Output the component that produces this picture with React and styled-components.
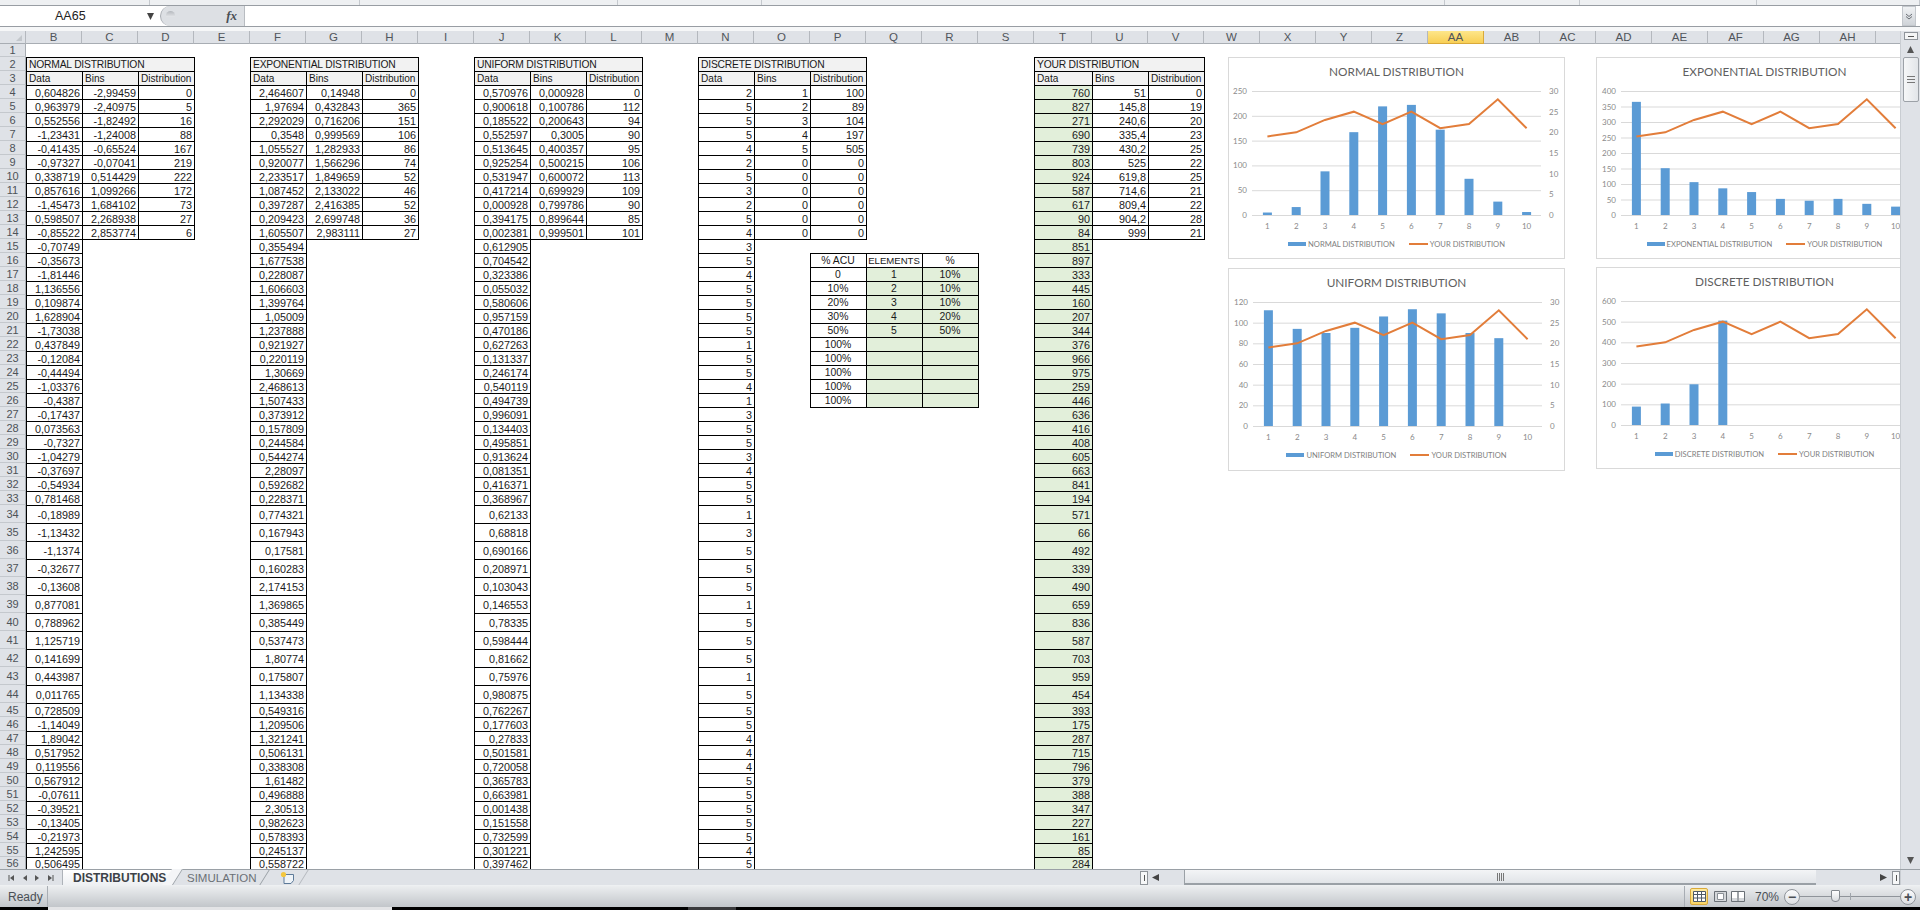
import React from 'react'
import styled, { createGlobalStyle } from 'styled-components'

const COLS = ['B','C','D','E','F','G','H','I','J','K','L','M','N','O','P','Q','R','S','T','U','V','W','X','Y','Z','AA','AB','AC','AD','AE','AF','AG','AH','AI']
const GRID = '26px repeat(18, 56px) 58px repeat(14, 56px) 56px'

const col = s => s.split(' ')

const data = {
  B: col('0,604826 0,963979 0,552556 -1,23431 -0,41435 -0,97327 0,338719 0,857616 -1,45473 0,598507 -0,85522 -0,70749 -0,35673 -1,81446 1,136556 0,109874 1,628904 -1,73038 0,437849 -0,12084 -0,44494 -1,03376 -0,4387 -0,17437 0,073563 -0,7327 -1,04279 -0,37697 -0,54934 0,781468 -0,18989 -1,13432 -1,1374 -0,32677 -0,13608 0,877081 0,788962 1,125719 0,141699 0,443987 0,011765 0,728509 -1,14049 1,89042 0,517952 0,119556 0,567912 -0,07611 -0,39521 -0,13405 -0,21973 1,242595 0,506495'),
  C: col('-2,99459 -2,40975 -1,82492 -1,24008 -0,65524 -0,07041 0,514429 1,099266 1,684102 2,268938 2,853774'),
  D: col('0 5 16 88 167 219 222 172 73 27 6'),
  F: col('2,464607 1,97694 2,292029 0,3548 1,055527 0,920077 2,233517 1,087452 0,397287 0,209423 1,605507 0,355494 1,677538 0,228087 1,606603 1,399764 1,05009 1,237888 0,921927 0,220119 1,30669 2,468613 1,507433 0,373912 0,157809 0,244584 0,544274 2,28097 0,592682 0,228371 0,774321 0,167943 0,17581 0,160283 2,174153 1,369865 0,385449 0,537473 1,80774 0,175807 1,134338 0,549316 1,209506 1,321241 0,506131 0,338308 1,61482 0,496888 2,30513 0,982623 0,578393 0,245137 0,558722'),
  G: col('0,14948 0,432843 0,716206 0,999569 1,282933 1,566296 1,849659 2,133022 2,416385 2,699748 2,983111'),
  H: col('0 365 151 106 86 74 52 46 52 36 27'),
  J: col('0,570976 0,900618 0,185522 0,552597 0,513645 0,925254 0,531947 0,417214 0,000928 0,394175 0,002381 0,612905 0,704542 0,323386 0,055032 0,580606 0,957159 0,470186 0,627263 0,131337 0,246174 0,540119 0,494739 0,996091 0,134403 0,495851 0,913624 0,081351 0,416371 0,368967 0,62133 0,68818 0,690166 0,208971 0,103043 0,146553 0,78335 0,598444 0,81662 0,75976 0,980875 0,762267 0,177603 0,27833 0,501581 0,720058 0,365783 0,663981 0,001438 0,151558 0,732599 0,301221 0,397462'),
  K: col('0,000928 0,100786 0,200643 0,3005 0,400357 0,500215 0,600072 0,699929 0,799786 0,899644 0,999501'),
  L: col('0 112 94 90 95 106 113 109 90 85 101'),
  N: col('2 5 5 5 4 2 5 3 2 5 4 3 5 4 5 5 5 5 1 5 5 4 1 3 5 5 3 4 5 5 1 3 5 5 5 1 5 5 5 1 5 5 5 4 4 4 5 5 5 5 5 4 5'),
  O: col('1 2 3 4 5 0 0 0 0 0 0'),
  P: col('100 89 104 197 505 0 0 0 0 0 0'),
  T: col('760 827 271 690 739 803 924 587 617 90 84 851 897 333 445 160 207 344 376 966 975 259 446 636 416 408 605 663 841 194 571 66 492 339 490 659 836 587 703 959 454 393 175 287 715 796 379 388 347 227 161 85 284'),
  U: col('51 145,8 240,6 335,4 430,2 525 619,8 714,6 809,4 904,2 999'),
  V: col('0 19 20 23 25 22 25 21 22 28 21'),
}

const tables = [
  { first: 'B', title: 'NORMAL DISTRIBUTION' },
  { first: 'F', title: 'EXPONENTIAL DISTRIBUTION' },
  { first: 'J', title: 'UNIFORM DISTRIBUTION' },
  { first: 'N', title: 'DISCRETE DISTRIBUTION' },
  { first: 'T', title: 'YOUR DISTRIBUTION' },
]

const acu = ['% ACU','0','10%','20%','30%','50%','100%','100%','100%','100%','100%']
const elements = ['ELEMENTS','1','2','3','4','5','','','','','']
const percents = ['%','10%','10%','10%','20%','50%','','','','','']

const YOUR = [19,20,23,25,22,25,21,22,28,21]

// the right axis of the two right hand charts sits behind the scrollbar
const charts = [
  { title: 'NORMAL DISTRIBUTION', bars: [5,16,88,167,219,222,172,73,27,6], max: 250, step: 50, left: 24, rightAxis: true },
  { title: 'EXPONENTIAL DISTRIBUTION', bars: [365,151,106,86,74,52,46,52,36,27], max: 400, step: 50, left: 25 },
  { title: 'UNIFORM DISTRIBUTION', bars: [112,94,90,95,106,113,109,90,85], max: 120, step: 20, left: 25, nudge: true, rightAxis: true },
  { title: 'DISCRETE DISTRIBUTION', bars: [89,104,197,505], max: 600, step: 100, left: 25 },
]

const GlobalStyle = createGlobalStyle`
  html, body { margin: 0; padding: 0; background: #fff; }
  * { box-sizing: border-box; }
`

const Window = styled.div`
  width: 1920px;
  height: 910px;
  overflow: hidden;
  display: flex;
  flex-direction: column;
  font-family: "Liberation Sans", Arial, sans-serif;
  background: #fff;
`

const RibbonEdge = styled.div`
  height: 6px;
  display: flex;
  background: #eef0f2;
  border-bottom: 1px solid #989da3;
`

const RibbonGroup = styled.div`
  width: ${p => p.$w}px;
  border-right: 1px solid #c5c9ce;
`

const FormulaRow = styled.div`
  height: 21px;
  display: flex;
  align-items: stretch;
  background: #fff;
  border-bottom: 1px solid #989da3;
`

const NameBox = styled.div`
  width: 160px;
  display: flex;
  align-items: center;
  justify-content: space-between;
  padding: 0 6px 0 55px;
  font-size: 12.5px;
  color: #222;
`

const FxGroove = styled.div`
  width: 85px;
  display: flex;
  align-items: center;
  justify-content: flex-end;
  padding: 0 7px 0 0;
  background: #dde0e4;
  border-radius: 11px 0 0 11px;
  border-left: 1px solid #a8acb2;
  border-right: 1px solid #b8bcc1;
  font: italic bold 13px "Liberation Serif", serif;
  color: #4a4f55;
  position: relative;

  &::before {
    content: '';
    position: absolute;
    left: 5px;
    top: 5px;
    width: 9px;
    height: 6px;
    border-radius: 5px 5px 0 0;
    background: linear-gradient(#b4b8bd, #e4e6e9);
  }
`

const FormulaInput = styled.div`
  flex: 1;
`

const ExpandButton = styled.div`
  width: 14px;
  margin-right: 4px;
  display: flex;
  align-items: center;
  justify-content: center;
  background: linear-gradient(#f0f2f4, #cfd3d8);
  border: 1px solid #c3c7cc;
`

const RowGap = styled.div`
  height: 4px;
  background: #f6f7f8;
`

const SheetArea = styled.div`
  height: 838px;
  display: flex;
`

const Grid = styled.div`
  width: 1900px;
  overflow: hidden;
  position: relative;
  background: #fff;
`

const Row = styled.div`
  display: grid;
  grid-template-columns: ${GRID};
  height: ${p => p.$h}px;
`

const ColHead = styled.div`
  display: flex;
  align-items: center;
  justify-content: center;
  font-size: 11.5px;
  color: #50555b;
  background: ${p => p.$active ? 'linear-gradient(#fde68a, #f8cf55)' : '#dfe2e7'};
  border-right: 1px solid ${p => p.$active ? '#d9a93a' : '#b4b8be'};
  border-bottom: 1px solid ${p => p.$active ? '#d9a93a' : '#a8adb3'};
`

const Corner = styled(ColHead)`
  position: relative;

  &::after {
    content: '';
    position: absolute;
    right: 3px;
    bottom: 2px;
    border-left: 6px solid transparent;
    border-bottom: 6px solid #c3c7cc;
  }
`

const RowHead = styled.div`
  display: flex;
  align-items: center;
  justify-content: center;
  font-size: 11px;
  color: #4d5258;
  background: #dfe2e7;
  border-right: 1px solid #a8adb3;
  border-bottom: 1px solid #c4c8cd;
`

const Cell = styled.div`
  position: relative;
  display: flex;
  align-items: center;
  justify-content: ${p => p.$center ? 'center' : 'flex-end'};
  padding-right: ${p => p.$center ? '0' : '2px'};
  padding-top: 1px;
  font-size: 10.8px;
  color: #1a1a1a;
  white-space: nowrap;
  background: ${p => p.$green ? '#e2efda' : 'transparent'};

  &::after {
    content: '';
    position: absolute;
    left: 0;
    top: 0;
    right: -1px;
    bottom: -1px;
    border: 1px solid #000;
    pointer-events: none;
  }
`

const HeadCell = styled(Cell)`
  justify-content: flex-start;
  padding: 1px 0 0 3px;
  font-size: 10.1px;
  background: #f2f2f2;
`

const TitleCell = styled(HeadCell)`
  grid-column: span 3;
  font-size: 10.3px;
  letter-spacing: -0.2px;
`

const BandCell = styled(Cell)`
  font-size: 10.4px;
`

const TightCell = styled(Cell)`
  font-size: 9.6px;
`

const Blank = styled.div``

const ChartLayer = styled.div`
  position: absolute;
  left: 1228px;
  top: 26px;
  display: grid;
  grid-template-columns: 337px 337px;
  grid-auto-rows: 202px;
  column-gap: 31px;
  row-gap: 8px;
`

const ChartCard = styled.div`
  height: ${p => p.$nudge ? 203 : 202}px;
  margin-top: ${p => p.$nudge ? 1 : 0}px;
  background: #fff;
  border: 1px solid #d9d9d9;
  display: flex;
  flex-direction: column;
  align-items: center;
  font-family: Lato, "Open Sans", sans-serif;
`

const ChartTitle = styled.div`
  height: 18px;
  margin-top: 5px;
  line-height: 18px;
  font-size: 11.8px;
  color: #5f5f5f;
`

const Plot = styled.svg`
  display: block;
  width: 335px;
  height: 150px;
  flex: none;
  text {
    font-family: Lato, "Open Sans", sans-serif;
    font-size: 8px;
    fill: #8a8a8a;
  }
`

const Legend = styled.div`
  margin-top: 8px;
  display: flex;
  align-items: center;
  gap: 14px;
  font-size: 7.6px;
  color: #7f7f7f;
`

const LegendItem = styled.div`
  display: flex;
  align-items: center;
  gap: 2px;
  white-space: nowrap;
`

const BarKey = styled.span`
  width: 18px;
  height: 4px;
  background: #5b9bd5;
`

const LineKey = styled.span`
  width: 19px;
  height: 2px;
  background: #e27d3a;
`

const VScroll = styled.div`
  width: 20px;
  background: #dfe2e7;
  border-left: 1px solid #c9cdd2;
  display: flex;
  flex-direction: column;
  align-items: center;
`

const SplitTop = styled.div`
  width: 14px;
  height: 8px;
  margin-top: 1px;
  background: #f4f5f6;
  border: 1px solid #8f949a;
  display: flex;
  align-items: center;
  justify-content: center;

  &::after {
    content: '';
    width: 6px;
    height: 1px;
    background: #555;
  }
`

const Thumb = styled.div`
  width: 16px;
  height: 45px;
  margin-top: 4px;
  border: 1px solid #9ca1a7;
  border-radius: 2px;
  background: linear-gradient(90deg, #f6f7f8, #e2e5e9);
  display: flex;
  align-items: center;
  justify-content: center;
`

const ScrollSpace = styled.div`
  flex: 1;
`

const ArrowSlot = styled.div`
  margin-top: ${p => p.$top || 0}px;
  margin-bottom: ${p => p.$bottom || 0}px;
  margin-left: ${p => p.$left || 0}px;
  height: 8px;
  display: flex;
  align-items: center;
  line-height: 0;
`

const TabRow = styled.div`
  height: 16px;
  display: flex;
  background: #dfe2e7;
  border-top: 1px solid #9aa0a6;
`

const TabArea = styled.div`
  width: 1140px;
  display: flex;
  align-items: stretch;
`

const TabNav = styled.div`
  width: 63px;
  display: flex;
  align-items: center;
  justify-content: space-around;
  padding: 0 6px;
  border-right: 1px solid #aeb3b9;
`

const ActiveTab = styled.div`
  position: relative;
  width: 110px;
  padding-left: 10px;
  display: flex;
  align-items: center;
  background: linear-gradient(#ffffff, #eef0f3);
  font-size: 12px;
  font-weight: bold;
  color: #3d4248;
  z-index: 1;

  &::after {
    content: '';
    position: absolute;
    right: -5px;
    top: -1px;
    bottom: 0;
    width: 10px;
    background: #f4f5f7;
    border-right: 1px solid #9aa0a6;
    transform: skewX(-32deg);
    z-index: -1;
  }
`

const SheetTab = styled.div`
  position: relative;
  width: 97px;
  padding-left: 14px;
  display: flex;
  align-items: center;
  font-size: 11.5px;
  color: #6b7076;

  &::after {
    content: '';
    position: absolute;
    right: 5px;
    top: 0;
    bottom: 0;
    width: 1px;
    background: #9aa0a6;
    transform: skewX(-32deg);
  }
`

const NewTab = styled.div`
  position: relative;
  width: 34px;
  display: flex;
  align-items: center;
  padding-left: 10px;

  &::after {
    content: '';
    position: absolute;
    right: 0;
    top: 0;
    bottom: 0;
    width: 1px;
    background: #b4b8be;
    transform: skewX(-32deg);
  }
`

const HScroll = styled.div`
  flex: 1;
  display: flex;
  align-items: center;
`

const SplitBox = styled.div`
  width: 8px;
  height: 14px;
  margin-left: ${p => p.$left || 0}px;
  background: #f6f7f8;
  border: 1px solid #8f949a;
  display: flex;
  align-items: center;
  justify-content: center;

  &::after {
    content: '';
    width: 1px;
    height: 6px;
    background: #555;
  }
`

const HThumb = styled.div`
  width: 632px;
  height: 15px;
  margin-left: 25px;
  border-left: 1px solid #9aa0a6;
  border-bottom: 2px solid #9aa0a6;
  background: linear-gradient(#f3f4f6, #e1e4e8);
  display: flex;
  align-items: center;
  justify-content: center;
`

const ScrollCorner = styled.div`
  width: 20px;
  border-left: 1px solid #c9cdd2;
`

const StatusBar = styled.div`
  height: 22px;
  border-top: 1px solid #eef0f2;
  display: flex;
  align-items: center;
  background: linear-gradient(#eceef0, #c2c6ca);
  font-size: 12px;
  color: #4a4f55;
`

const StatusText = styled.div`
  width: 48px;
  align-self: stretch;
  padding-left: 8px;
  display: flex;
  align-items: center;
  border-right: 1px solid #a8adb3;
`

const StatusFill = styled.div`
  flex: 1;
`

const ViewGroup = styled.div`
  width: 236px;
  align-self: stretch;
  display: flex;
  align-items: center;
  padding-left: 5px;
  border-left: 1px solid #a8adb3;
`

const ViewButton = styled.div`
  width: 18px;
  height: 17px;
  margin-right: ${p => p.$gap}px;
  display: flex;
  align-items: center;
  justify-content: center;
  border-radius: 2px;
  background: ${p => p.$on ? 'linear-gradient(#fdeaa0, #f9d466)' : 'transparent'};
  border: 1px solid ${p => p.$on ? '#d9a93a' : 'transparent'};
`

const ZoomLabel = styled.div`
  width: 29px;
  margin-left: 8px;
  font-size: 12px;
`

const ZoomButton = styled.div`
  width: 16px;
  height: 16px;
  border-radius: 50%;
  flex: none;
  border: 1px solid #8f949a;
  background: linear-gradient(#fbfbfc, #dcdfe2);
  display: flex;
  align-items: center;
  justify-content: center;
  font-size: 14px;
  font-weight: bold;
  line-height: 1;
  color: #4a4f55;
`

const ZoomTrack = styled.div`
  position: relative;
  width: 100px;
  height: 1px;
  background: #8f949a;
`

const ZoomThumb = styled.div`
  position: absolute;
  left: 31px;
  top: -6px;
  width: 9px;
  height: 12px;
  background: linear-gradient(#fff, #d9dcdf);
  border: 1px solid #84898f;
  border-radius: 1px 1px 4px 4px;
`

const ZoomTick = styled.div`
  position: absolute;
  left: 50px;
  top: -3px;
  width: 1px;
  height: 7px;
  background: #a0a5ab;
`

const Taskbar = styled.div`
  height: 3px;
  display: flex;
  background: #000;
`

const TaskSlot = styled.div`
  width: ${p => p.$w}px;
  background: ${p => p.$color};
`

const Tri = ({ dir = 'right', size = 6, fill = '#4a4f55' }) => {
  const pts = { right: '0,0 6,3 0,6', left: '6,0 0,3 6,6', up: '0,6 3,0 6,6', down: '0,0 6,0 3,6' }
  return (
    <svg width={size} height={size} viewBox="0 0 6 6"><polygon points={pts[dir]} fill={fill} /></svg>
  )
}

const Chevron = () => (
  <svg width="8" height="7" viewBox="0 0 8 7">
    <path d="M1 1l3 2.5L7 1M1 3.5L4 6l3-2.5" fill="none" stroke="#6a6f75" />
  </svg>
)

const Grip = ({ vertical }) => (
  vertical
    ? <svg width="8" height="7"><path d="M0 .5h8M0 3.5h8M0 6.5h8" stroke="#777" /></svg>
    : <svg width="8" height="8"><path d="M.5 0v8M2.5 0v8M4.5 0v8M6.5 0v8" stroke="#777" /></svg>
)

const NavIcon = ({ dir, end }) => (
  <svg width="8" height="8" viewBox="0 0 8 8">
    {dir === 'left'
      ? <polygon points="6,1 2,4 6,7" fill="#555" />
      : <polygon points="2,1 6,4 2,7" fill="#555" />}
    {end && (dir === 'left'
      ? <rect x="0.5" y="1" width="1" height="6" fill="#555" />
      : <rect x="6.5" y="1" width="1" height="6" fill="#555" />)}
  </svg>
)

const NewSheetIcon = () => (
  <svg width="15" height="13" viewBox="0 0 15 13">
    <path d="M4 3.5h9.5v6l-2.5 3H4z" fill="#eef3f8" stroke="#5d7a99" />
    <circle cx="3.5" cy="3.5" r="2.6" fill="#f3c63f" />
  </svg>
)

const NormalIcon = () => (
  <svg width="13" height="11" viewBox="0 0 13 11">
    <path d="M.5.5h12v10H.5zM.5 3.5h12M.5 7h12M4.5.5v10M8.5.5v10" fill="#fff" stroke="#4f5a66" />
  </svg>
)

const PageIcon = () => (
  <svg width="13" height="11" viewBox="0 0 13 11">
    <path d="M.5.5h12v10H.5z" fill="#d4d7da" stroke="#6a7076" />
    <path d="M3.5 2.5h6v6h-6z" fill="#fff" stroke="#8a9096" />
  </svg>
)

const BreakIcon = () => (
  <svg width="14" height="11" viewBox="0 0 14 11">
    <path d="M.5.5h13v10H.5z" fill="#d4d7da" stroke="#6a7076" />
    <path d="M1 1h5v6H1zM8 1h5v6H8z" fill="#fff" />
    <path d="M7 .5v10" stroke="#6a7076" />
  </svg>
)

const Chart = ({ title, bars, max, step, left, nudge, rightAxis }) => {
  const top = 10
  const bottom = 134
  const width = 288
  const band = width / 10
  const y = v => bottom - (v / max) * (bottom - top)
  const yr = v => bottom - (v / 30) * (bottom - top)
  const ticks = []
  for (let v = 0; v <= max; v += step) ticks.push(v)
  const line = YOUR.map((v, i) => `${left + band * (i + 0.5)},${yr(v)}`).join(' ')
  return (
    <ChartCard $nudge={nudge}>
      <ChartTitle>{title}</ChartTitle>
      <Plot viewBox="0 0 335 150">
        {ticks.map(v => (
          <g key={v}>
            <line x1={left - 1} x2={left + width} y1={y(v) + 0.5} y2={y(v) + 0.5} stroke="#d9d9d9" />
            <text x={left - 6} y={y(v) + 3} textAnchor="end">{v}</text>
          </g>
        ))}
        {rightAxis && [0, 5, 10, 15, 20, 25, 30].map(v => (
          <text key={v} x={left + width + 8} y={yr(v) + 3}>{v}</text>
        ))}
        {bars.map((v, i) => (
          <rect key={i} x={left + band * (i + 0.5) - 4.5} y={y(v)} width="9" height={bottom - y(v)} fill="#5b9bd5" />
        ))}
        <polyline points={line} fill="none" stroke="#e27d3a" strokeWidth="2" />
        {YOUR.map((_, i) => (
          <text key={i} x={left + band * (i + 0.5)} y="148" textAnchor="middle">{i + 1}</text>
        ))}
      </Plot>
      <Legend>
        <LegendItem><BarKey />{title}</LegendItem>
        <LegendItem><LineKey />YOUR DISTRIBUTION</LegendItem>
      </Legend>
    </ChartCard>
  )
}

const rowHeight = r => {
  if (r >= 34 && r <= 44) return 18
  if (r === 56) return 12
  return 14
}

// builds one sheet row, column by column, so empty cells just hold their place
const renderCells = r => {
  const out = []
  let skip = 0
  COLS.forEach((c, i) => {
    if (skip > 0) {
      skip--
      return
    }
    const table = tables.find(t => t.first === c)
    const owner = tables.find(t => {
      const at = COLS.indexOf(t.first)
      return i >= at && i < at + 3
    })
    if (r === 2 && table) {
      out.push(<TitleCell key={c}>{table.title}</TitleCell>)
      skip = 2
      return
    }
    if (r === 3 && owner) {
      const at = i - COLS.indexOf(owner.first)
      out.push(<HeadCell key={c}>{['Data', 'Bins', 'Distribution'][at]}</HeadCell>)
      return
    }
    if (r >= 16 && r <= 26) {
      const k = r - 16
      if (c === 'P') {
        out.push(<BandCell key={c} $center>{acu[k]}</BandCell>)
        return
      }
      if (c === 'Q') {
        out.push(k === 0
          ? <TightCell key={c} $center>{elements[k]}</TightCell>
          : <BandCell key={c} $center $green>{elements[k]}</BandCell>)
        return
      }
      if (c === 'R') {
        out.push(<BandCell key={c} $center $green={k > 0}>{percents[k]}</BandCell>)
        return
      }
    }
    const values = data[c]
    const value = values && r >= 4 ? values[r - 4] : undefined
    if (value !== undefined) {
      out.push(<Cell key={c} $green={c === 'T'}>{value}</Cell>)
      return
    }
    out.push(<Blank key={c} />)
  })
  return out
}

const rows = Array.from({ length: 56 }, (_, i) => i + 1)

const App = () => (
  <Window>
    <GlobalStyle />
    <RibbonEdge>
      {[150, 210, 258, 144, 683, 135, 177, 163].map((w, i) => <RibbonGroup key={i} $w={w} />)}
    </RibbonEdge>
    <FormulaRow>
      <NameBox>
        AA65
        <Tri dir="down" size={7} fill="#444" />
      </NameBox>
      <FxGroove>fx</FxGroove>
      <FormulaInput />
      <ExpandButton><Chevron /></ExpandButton>
    </FormulaRow>
    <RowGap />
    <SheetArea>
      <Grid>
        <Row $h={12}>
          <Corner />
          {COLS.map(c => <ColHead key={c} $active={c === 'AA'}>{c === 'AI' ? '' : c}</ColHead>)}
        </Row>
        {rows.map(r => (
          <Row key={r} $h={rowHeight(r)}>
            <RowHead>{r}</RowHead>
            {renderCells(r)}
          </Row>
        ))}
        <ChartLayer>
          {charts.map(c => <Chart key={c.title} {...c} />)}
        </ChartLayer>
      </Grid>
      <VScroll>
        <SplitTop />
        <ArrowSlot $top={5}><Tri dir="up" size={7} fill="#555" /></ArrowSlot>
        <Thumb><Grip vertical /></Thumb>
        <ScrollSpace />
        <ArrowSlot $bottom={5}><Tri dir="down" size={7} fill="#555" /></ArrowSlot>
      </VScroll>
    </SheetArea>
    <TabRow>
      <TabArea>
        <TabNav>
          <NavIcon dir="left" end />
          <NavIcon dir="left" />
          <NavIcon dir="right" />
          <NavIcon dir="right" end />
        </TabNav>
        <ActiveTab>DISTRIBUTIONS</ActiveTab>
        <SheetTab>SIMULATION</SheetTab>
        <NewTab><NewSheetIcon /></NewTab>
      </TabArea>
      <HScroll>
        <SplitBox />
        <ArrowSlot $left={4}><Tri dir="left" size={7} fill="#444" /></ArrowSlot>
        <HThumb><Grip /></HThumb>
        <ScrollSpace />
        <Tri dir="right" size={7} fill="#444" />
        <SplitBox $left={5} />
      </HScroll>
      <ScrollCorner />
    </TabRow>
    <StatusBar>
      <StatusText>Ready</StatusText>
      <StatusFill />
      <ViewGroup>
        <ViewButton $on $gap={3}><NormalIcon /></ViewButton>
        <ViewButton $gap={0}><PageIcon /></ViewButton>
        <ViewButton $gap={0}><BreakIcon /></ViewButton>
        <ZoomLabel>70%</ZoomLabel>
        <ZoomButton>−</ZoomButton>
        <ZoomTrack>
          <ZoomThumb />
          <ZoomTick />
        </ZoomTrack>
        <ZoomButton>+</ZoomButton>
      </ViewGroup>
    </StatusBar>
    <Taskbar>
      <TaskSlot $w={48} $color="#000" />
      <TaskSlot $w={344} $color="#e3e4e6" />
      <TaskSlot $w={296} $color="#000" />
      <TaskSlot $w={48} $color="#3a3a3c" />
    </Taskbar>
  </Window>
)

export default App
